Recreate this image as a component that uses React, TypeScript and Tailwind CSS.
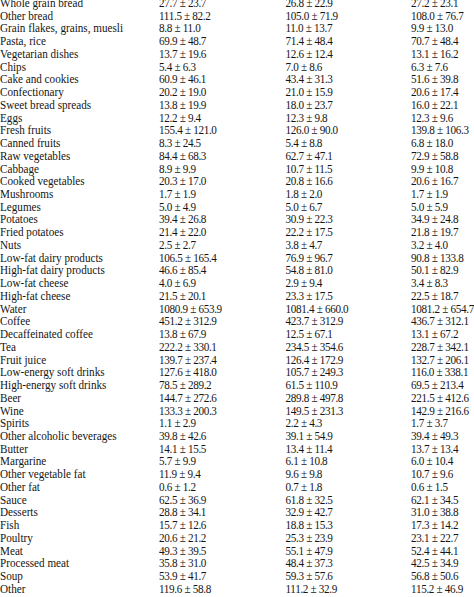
const rows: [string, string, string, string][] = [
  ['Whole grain bread', '27.7 ± 23.7', '26.8 ± 22.9', '27.2 ± 23.1'],
  ['Other bread', '111.5 ± 82.2', '105.0 ± 71.9', '108.0 ± 76.7'],
  ['Grain flakes, grains, muesli', '8.8 ± 11.0', '11.0 ± 13.7', '9.9 ± 13.0'],
  ['Pasta, rice', '69.9 ± 48.7', '71.4 ± 48.4', '70.7 ± 48.4'],
  ['Vegetarian dishes', '13.7 ± 19.6', '12.6 ± 12.4', '13.1 ± 16.2'],
  ['Chips', '5.4 ± 6.3', '7.0 ± 8.6', '6.3 ± 7.6'],
  ['Cake and cookies', '60.9 ± 46.1', '43.4 ± 31.3', '51.6 ± 39.8'],
  ['Confectionary', '20.2 ± 19.0', '21.0 ± 15.9', '20.6 ± 17.4'],
  ['Sweet bread spreads', '13.8 ± 19.9', '18.0 ± 23.7', '16.0 ± 22.1'],
  ['Eggs', '12.2 ± 9.4', '12.3 ± 9.8', '12.3 ± 9.6'],
  ['Fresh fruits', '155.4 ± 121.0', '126.0 ± 90.0', '139.8 ± 106.3'],
  ['Canned fruits', '8.3 ± 24.5', '5.4 ± 8.8', '6.8 ± 18.0'],
  ['Raw vegetables', '84.4 ± 68.3', '62.7 ± 47.1', '72.9 ± 58.8'],
  ['Cabbage', '8.9 ± 9.9', '10.7 ± 11.5', '9.9 ± 10.8'],
  ['Cooked vegetables', '20.3 ± 17.0', '20.8 ± 16.6', '20.6 ± 16.7'],
  ['Mushrooms', '1.7 ± 1.9', '1.8 ± 2.0', '1.7 ± 1.9'],
  ['Legumes', '5.0 ± 4.9', '5.0 ± 6.7', '5.0 ± 5.9'],
  ['Potatoes', '39.4 ± 26.8', '30.9 ± 22.3', '34.9 ± 24.8'],
  ['Fried potatoes', '21.4 ± 22.0', '22.2 ± 17.5', '21.8 ± 19.7'],
  ['Nuts', '2.5 ± 2.7', '3.8 ± 4.7', '3.2 ± 4.0'],
  ['Low-fat dairy products', '106.5 ± 165.4', '76.9 ± 96.7', '90.8 ± 133.8'],
  ['High-fat dairy products', '46.6 ± 85.4', '54.8 ± 81.0', '50.1 ± 82.9'],
  ['Low-fat cheese', '4.0 ± 6.9', '2.9 ± 9.4', '3.4 ± 8.3'],
  ['High-fat cheese', '21.5 ± 20.1', '23.3 ± 17.5', '22.5 ± 18.7'],
  ['Water', '1080.9 ± 653.9', '1081.4 ± 660.0', '1081.2 ± 654.7'],
  ['Coffee', '451.2 ± 312.9', '423.7 ± 312.9', '436.7 ± 312.1'],
  ['Decaffeinated coffee', '13.8 ± 67.9', '12.5 ± 67.1', '13.1 ± 67.2'],
  ['Tea', '222.2 ± 330.1', '234.5 ± 354.6', '228.7 ± 342.1'],
  ['Fruit juice', '139.7 ± 237.4', '126.4 ± 172.9', '132.7 ± 206.1'],
  ['Low-energy soft drinks', '127.6 ± 418.0', '105.7 ± 249.3', '116.0 ± 338.1'],
  ['High-energy soft drinks', '78.5 ± 289.2', '61.5 ± 110.9', '69.5 ± 213.4'],
  ['Beer', '144.7 ± 272.6', '289.8 ± 497.8', '221.5 ± 412.6'],
  ['Wine', '133.3 ± 200.3', '149.5 ± 231.3', '142.9 ± 216.6'],
  ['Spirits', '1.1 ± 2.9', '2.2 ± 4.3', '1.7 ± 3.7'],
  ['Other alcoholic beverages', '39.8 ± 42.6', '39.1 ± 54.9', '39.4 ± 49.3'],
  ['Butter', '14.1 ± 15.5', '13.4 ± 11.4', '13.7 ± 13.4'],
  ['Margarine', '5.7 ± 9.9', '6.1 ± 10.8', '6.0 ± 10.4'],
  ['Other vegetable fat', '11.9 ± 9.4', '9.6 ± 9.8', '10.7 ± 9.6'],
  ['Other fat', '0.6 ± 1.2', '0.7 ± 1.8', '0.6 ± 1.5'],
  ['Sauce', '62.5 ± 36.9', '61.8 ± 32.5', '62.1 ± 34.5'],
  ['Desserts', '28.8 ± 34.1', '32.9 ± 42.7', '31.0 ± 38.8'],
  ['Fish', '15.7 ± 12.6', '18.8 ± 15.3', '17.3 ± 14.2'],
  ['Poultry', '20.6 ± 21.2', '25.3 ± 23.9', '23.1 ± 22.7'],
  ['Meat', '49.3 ± 39.5', '55.1 ± 47.9', '52.4 ± 44.1'],
  ['Processed meat', '35.8 ± 31.0', '48.4 ± 37.3', '42.5 ± 34.9'],
  ['Soup', '53.9 ± 41.7', '59.3 ± 57.6', '56.8 ± 50.6'],
  ['Other', '119.6 ± 58.8', '111.2 ± 32.9', '115.2 ± 46.9'],
]

export default function App() {
  return (
    <div className="w-[474px] h-[597px] overflow-hidden bg-white text-[#151515] font-['Liberation_Serif',serif] text-[12px] leading-[12.74px]">
      {/* the scan is squeezed sideways, so the table is too */}
      <div className="w-[510px] -mt-[3px] flex flex-col origin-top-left scale-x-[0.93]">
        {rows.map(([name, a, b, c]) => (
          <div key={name} className="grid grid-cols-[171px_136px_135px_1fr] h-[12.74px] whitespace-nowrap">
            <span>{name}</span>
            <span className="tracking-[-0.36px]">{a}</span>
            <span className="tracking-[-0.36px]">{b}</span>
            <span className="tracking-[-0.36px]">{c}</span>
          </div>
        ))}
      </div>
    </div>
  )
}
